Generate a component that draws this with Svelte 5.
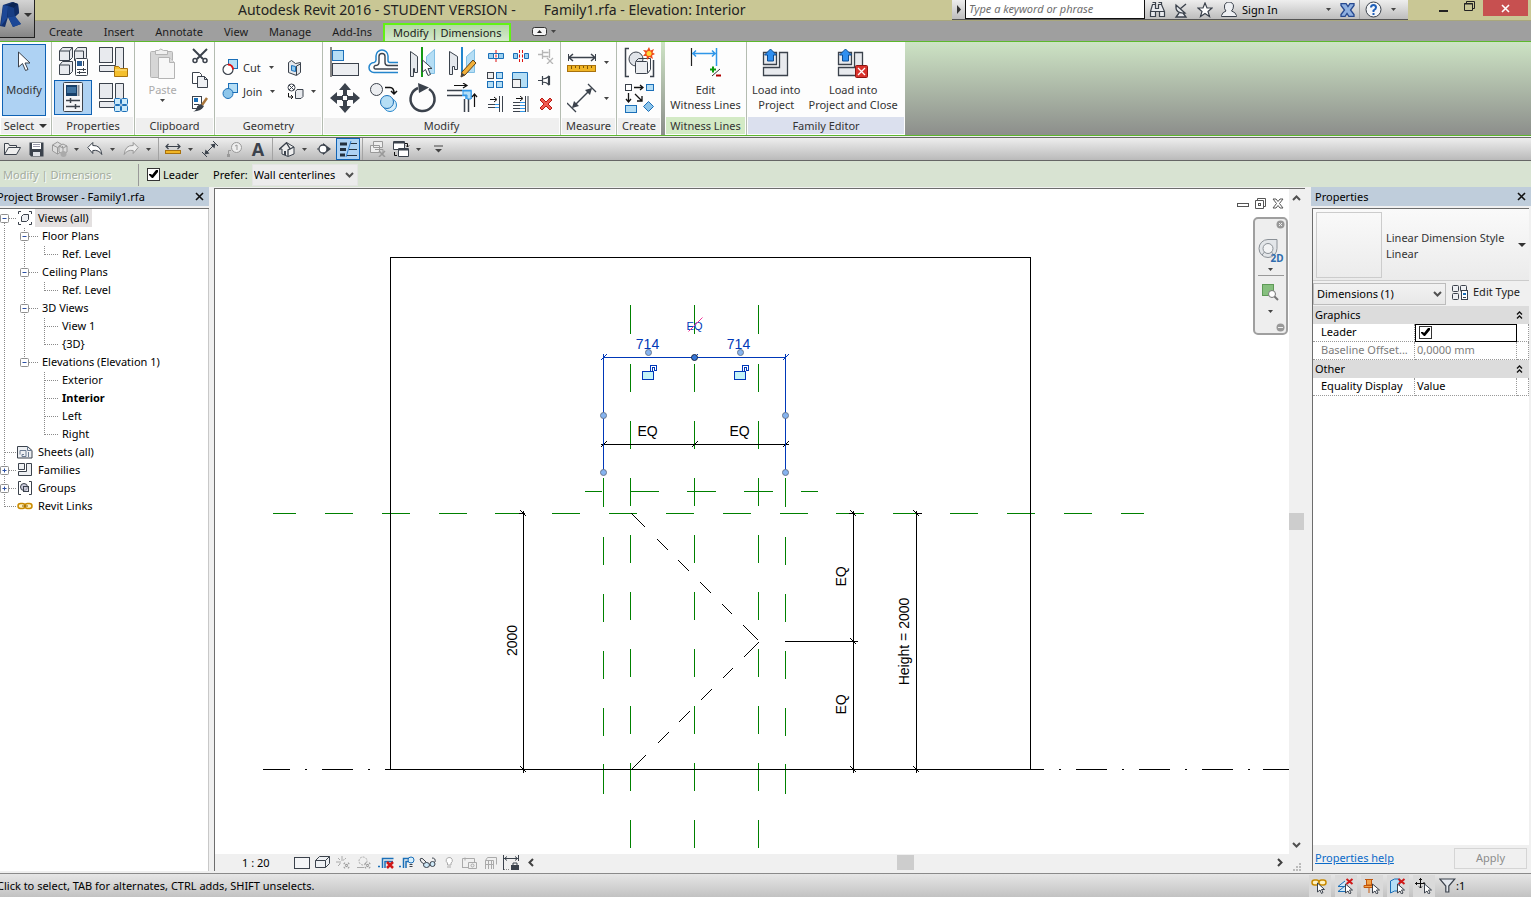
<script lang="ts">
	// Desktop shell of the family editor: title bar, ribbon, project browser,
	// elevation view and properties palette.

	interface TreeNode {
		label: string;
		depth: number;
		/** Expander state, when the node has one */
		box?: '-' | '+';
		icon?: string;
		/** Depths whose guide line runs through the full row */
		through: number[];
		/** Last child of its parent, so the guide stops at the middle */
		last?: boolean;
		bold?: boolean;
		selected?: boolean;
	}

	const D = '#3b424c';
	const B = '#1b6fb8';
	const L = '#b5def5';

	// Icon artwork: [width, height, markup]
	const icons: Record<string, [number, number, string]> = {
		app: [22, 28, `<path d="M0 25L3 4 12 1l6 2 1 9-4 4 6 7-8 3-5-10-3 10z" fill="#12306e"/><path d="M3 4l5 1-1 12-6 8z" fill="#1d4796"/><path d="M8 5l5-4 5 2-4 4z" fill="#0b2453"/><path d="M8 16l7-1 6 8-8 3z" fill="#1b4797"/><path d="M8 5l6 2 1 8-7 1z" fill="#173d84"/><path d="M14 7l4-4 1 9-4 3z" fill="#0f2c66"/>`],
		cursor: [14, 22, `<path d="M1.500 1v15l4-3.500 3 7 2.500-1-3-6.500h5z" fill="#fff" stroke="${D}"/>`],
		types: [31, 31, `<g stroke="${D}" fill="#e8eaee"><path d="M1.500 5l3-3.500h10v10l-3 3h-10z"/><path d="M16.500 5l3-3.500h9v10l-2 3h-10z"/><path d="M1.500 19l3-3.500h10v10l-3 3h-10z"/><path d="M1.500 5h10v9.500M11.500 5l3-3.500M16.500 5h9v9M1.500 19h10v9.500" fill="none"/><rect x="17.500" y="12.500" width="12" height="17" rx="1" fill="#fff"/></g><path d="M19 15h5v5h-5z" fill="#2a5c94"/><path d="M25.500 15v5M19 23.500h9M19 26.500h9M25.500 22v3M21.500 25v3" stroke="${D}"/>`],
		familyFolder: [31, 31, `<g stroke="${D}" fill="#e8eaee"><rect x="1.500" y="1.500" width="13" height="15"/><path d="M17.500 1.500h8v24h-24v-6h16z"/></g><path d="M16.500 20.500h4l2 2h7v8h-13z" fill="#f4bf2c" stroke="#a9720d"/><path d="M17 24h12" stroke="#ffe694"/>`],
		propsPalette: [22, 31, `<rect x="1.500" y=".5" width="19" height="29" rx="1" fill="#f4f5f7" stroke="${D}"/><path d="M4 3h11v11H4z" fill="#173f68"/><path d="M5 5h9v6H5z" fill="#3e719f"/><path d="M16.500 3v11" stroke="#8b8f96" stroke-width="2"/><path d="M4 18.500h14M4 24.500h14M8.500 16v5M13.500 22v5" stroke="${D}" stroke-width="1.500"/>`],
		familyGrid: [31, 31, `<g stroke="${D}" fill="#e8eaee"><rect x="1.500" y="1.500" width="13" height="15"/><path d="M17.500 1.500h8v24h-24v-6h16z"/></g><g fill="#cbeafa" stroke="${B}"><rect x="16.500" y="16.500" width="6" height="6" rx="1"/><rect x="23.500" y="16.500" width="6" height="6" rx="1"/><rect x="16.500" y="23.500" width="6" height="6" rx="1"/><rect x="23.500" y="23.500" width="6" height="6" rx="1"/></g>`],
		paste: [26, 32, `<g stroke="#b4b4b4"><rect x=".5" y="3.500" width="22" height="26" rx="1" fill="#d6d6d6"/><path d="M5.500 2.500h3q2-3 5 0h4v4h-12z" fill="#f0f0f0"/><path d="M8.500 9.500h11l5 5v16h-16z" fill="#f7f7f7"/><path d="M19.500 9.500v5h5" fill="#ddd"/></g>`],
		cutClip: [16, 16, `<path d="M1 1l10 10M15 1L5 11" stroke="${D}" stroke-width="2"/><circle cx="3" cy="12.500" r="2" fill="#fff" stroke="${D}" stroke-width="1.500"/><circle cx="13" cy="12.500" r="2" fill="#fff" stroke="${D}" stroke-width="1.500"/>`],
		copyClip: [16, 16, `<path d="M.5.5h7l2 2v9h-9z" fill="#fff" stroke="${D}"/><path d="M5.500 4.500h7l3 3v8h-10z" fill="#eef0f3" stroke="${D}"/><path d="M12.500 4.500v3h3" fill="none" stroke="${D}"/>`],
		matchType: [16, 16, `<rect x=".5" y=".5" width="9" height="12" fill="#fff" stroke="${D}"/><path d="M2 2h4v4H2z" fill="${B}"/><path d="M2 8.500h5" stroke="${D}"/><path d="M15 2l-5 7" stroke="#a8753a" stroke-width="2.500"/><path d="M8 8l4 2q-2 5-11 5.500 4-1.500 4-5z" fill="${D}"/>`],
		cutGeom: [17, 17, `<rect x="6.500" y=".5" width="9" height="9" fill="${L}" stroke="${B}"/><circle cx="6" cy="10.500" r="5" fill="#fff" stroke="${D}" stroke-width="1.200"/><path d="M6 5.500a5 5 0 0 1 5 5" fill="none" stroke="#e81010" stroke-width="1.800"/>`],
		joinGeom: [17, 17, `<rect x="6.500" y=".5" width="9" height="9" fill="${L}" stroke="${B}"/><circle cx="6" cy="10.500" r="5" fill="#8ec6ea" stroke="${B}"/>`],
		cope: [16, 16, `<path d="M1.500 2.500l3-2 4 3 5-1v10l-4 3-8-3z" fill="#e4e7eb" stroke="${D}"/><path d="M4.500 5.500l4 1v5l-4-1z" fill="#8ecaf0" stroke="${B}"/><path d="M9.500 15V6l4-2" fill="none" stroke="${D}"/>`],
		split: [17, 17, `<circle cx="4.500" cy="4.500" r="3.500" fill="#fff" stroke="${D}"/><path d="M2 2l5 5M7 2L2 7" stroke="${D}"/><path d="M8.500 8.500l1.500-2h6v7l-2 2H8.500z" fill="#e8eaee" stroke="${D}"/><path d="M1.500 10v4H6M4 12l2 2-2 2" fill="none" stroke="#111"/>`],
		align: [30, 30, `<path d="M1 0v30" stroke="#111"/><rect x="2.500" y="3.500" width="11" height="10" fill="${L}" stroke="${B}"/><rect x="2.500" y="16.500" width="26" height="12" fill="#eceef1" stroke="${D}"/>`],
		offset: [31, 30, `<path d="M30 15.500h-8q-2 0-2-2V9a6 6 0 0 0-12 0v4q0 2-2 2.500a5 5 0 0 0 0 10h24" fill="none" stroke="#2385cc" stroke-width="1.500"/><path d="M30 18.500h-10q-3 0-3-3V9.500a3 3 0 0 0-6 0v6q0 3-4 3a2 2 0 0 0 0 3.500h23" fill="none" stroke="${D}" stroke-width="1.400"/>`],
		mirrorPick: [30, 31, `<path d="M2.500 4.500l7 5v16h-3v-4h-1v8h-3z" fill="#e5e8ec" stroke="${D}"/><path d="M26.500 2.500l-8 7v17h8z" fill="${L}" stroke="#81bfe4"/><path d="M14 0v30" stroke="#159a15" stroke-width="2"/><path d="M14.500 13v12l3-2.500 2.500 6 2.500-1-2.500-6h4z" fill="#fff" stroke="${D}"/>`],
		mirrorDraw: [30, 31, `<path d="M2.500 4.500l8 5v13h-3v-3h-2v8h-3z" fill="#e5e8ec" stroke="${D}"/><path d="M27.500 2.500l-8 7v16h8z" fill="${L}" stroke="#81bfe4"/><path d="M15 0v28" stroke="#2385cc" stroke-width="2"/><path d="M26 13l3 3-11 12-4 2 1-5z" fill="#f2b13a" stroke="#614016"/><path d="M14 30l1-4 3 2z" fill="${D}"/>`],
		move: [30, 30, `<path d="M15 0l6 7h-4v5h-4V7H9zM15 30l6-7h-4v-5h-4v5H9zM0 15l7-6v4h5v4H7v4zM30 15l-7-6v4h-5v4h5v4z" fill="${D}"/><rect x="12.500" y="12.500" width="5" height="5" fill="#fff" stroke="${D}"/>`],
		copy: [30, 30, `<circle cx="7.500" cy="6.500" r="6" fill="#eceef1" stroke="${D}"/><path d="M16 4.500h5q4 0 4 6M22 8l3 3 3-3" fill="none" stroke="#111" stroke-width="1.500"/><circle cx="21" cy="22" r="6.500" fill="#d7eefa" stroke="#2385cc"/><circle cx="18" cy="19" r="6.500" fill="${L}" stroke="${B}"/>`],
		rotate: [30, 30, `<path d="M10 5a12 12 0 1 0 11 1" fill="none" stroke="${D}" stroke-width="2.500"/><path d="M10 0l11 4.500-10 5.500z" fill="${D}"/>`],
		trim: [32, 30, `<path d="M1 7.500h15M1 12.500h15M18.500 16v13M22.500 16v13" stroke="${D}" stroke-width="1.500"/><path d="M16 7.500h9V16M16 12.500h4V16" fill="none" stroke="#2f96e8" stroke-width="1.500"/><path d="M17 8h8v8h-4v-4h-4z" fill="${L}" stroke="#2f96e8"/><path d="M8 2.500h12M17 0l4 2.500L17 5M28.500 24V12M26 14l2.500-3 2.500 3" fill="none" stroke="#111" stroke-width="1.200"/>`],
		splitEl: [16, 16, `<path d="M.5 5.500h5v5h-5zM10.500 5.500h5v5h-5z" fill="#9bd0f0" stroke="${B}"/><path d="M8 2v3M8 6.500v3M8 11v3" stroke="#d11"/><path d="M5.500 5.500h5M5.500 10.500h5" stroke="${B}"/>`],
		splitGap: [16, 16, `<path d="M.5 5.500h4v5h-4zM11.500 5.500h4v5h-4z" fill="#9bd0f0" stroke="${B}"/><path d="M6.500 2v3M6.500 6.500v3M6.500 11v3M9.500 2v3M9.500 6.500v3M9.500 11v3" stroke="#d11"/>`],
		unpin: [16, 16, `<path d="M0 6.500h4M4.500 2v9M4.500 4.500h6M4.500 8.500h6M11.500 1v9M9 10l6 6M15 10l-6 6" fill="none" stroke="#b6b6b6" stroke-width="1.300"/>`],
		array: [17, 17, `<g stroke="${B}" fill="${L}"><rect x=".5" y=".5" width="6" height="6" fill="#eee" stroke="${D}"/><rect x="9.500" y=".5" width="6" height="6"/><rect x=".5" y="9.500" width="6" height="6"/><rect x="9.500" y="9.500" width="6" height="6"/></g>`],
		scale: [17, 17, `<path d="M.5.5h15v15H.5z" fill="${L}" stroke="${B}"/><rect x=".5" y="7.500" width="8" height="8" fill="#f3f3f3" stroke="${D}"/>`],
		pin: [16, 16, `<path d="M0 8.500h4M4.500 4v9M4.500 6.500q3 1 6-2v8q-3-3-6-2M11.500 4v9" fill="none" stroke="${D}" stroke-width="1.200"/>`],
		trimOne: [16, 16, `<path d="M0 8.500h7M0 11.500h7M11.500 0v16M14.500 0v16" stroke="${D}"/><path d="M7 8.500h4M7 11.500h4" stroke="#2f96e8"/><path d="M2 3.500h6M6 1l3 2.500L6 6" fill="none" stroke="#111"/>`],
		trimMany: [16, 16, `<path d="M0 6.500h7M0 9.500h7M0 12.500h7M0 15.500h7M12.500 0v16M15 0v16" stroke="${D}"/><path d="M7 6.500h5M7 9.500h5M7 12.500h5M7 15.500h5" stroke="#2f96e8"/><path d="M3 2.500h6M7 0l3 2.500L7 5" fill="none" stroke="#111"/>`],
		del: [14, 14, `<path d="M1 3l2-2 4 4 4-4 2 2-4 4 4 4-2 2-4-4-4 4-2-2 4-4z" fill="#f05a50" stroke="#b81812"/>`],
		measure: [30, 24, `<path d="M2 7.500h26M6 4L2 7.500 6 11M24 4l4 3.500-4 3.500" fill="none" stroke="${D}" stroke-width="1.500"/><path d="M1.500 4v7M28.500 4v7" stroke="${D}"/><rect x=".5" y="15.500" width="28" height="6" fill="#f0b526" stroke="#a9720d"/><path d="M4.500 16v3M8.500 16v2M12.500 16v3M16.500 16v2M20.500 16v3M24.500 16v2" stroke="#7c5408"/>`],
		alignedDim: [30, 30, `<path d="M6 24L24 6" stroke="${D}" stroke-width="1.500"/><path d="M5 25l2-7 5 5zM25 5l-2 7-5-5z" fill="${D}"/><path d="M0 20l9 9M21 1l8 8" stroke="${D}" stroke-width="1.300"/>`],
		createGroup: [31, 31, `<path d="M5 1.500H1.500v28H5M26 29.500h3.500V13" fill="none" stroke="${D}" stroke-width="1.500"/><circle cx="12" cy="12" r="7" fill="#e1e4e9" stroke="${D}"/><rect x="11.500" y="14.500" width="12" height="12" rx="1" fill="#eceef1" stroke="${D}"/><path d="M11.500 14.500l3-3h12v11l-3 4" fill="none" stroke="${D}"/><path d="M25 0l1.500 3.500L30 2l-1.500 3.500L31 7l-3 1.500L29 12l-3.500-2L23 13l-.5-4L19 9l2.500-3L19 3l4 .5z" fill="#ef4a1a"/><circle cx="25" cy="6.500" r="2.500" fill="#ffd83a"/>`],
		createSimilar: [31, 31, `<rect x="1.500" y="1.500" width="6" height="6" fill="#fff" stroke="${D}"/><rect x="22.500" y="1.500" width="7" height="6" fill="${L}" stroke="${B}"/><rect x="1.500" y="22.500" width="11" height="7" fill="${L}" stroke="${B}"/><path d="M24.500 18.500l5 5-5 5-5-5z" fill="#8cc4ea" stroke="${B}"/><path d="M10 4.500h9M16 2l3 2.500L16 7M4.500 10v9M2 16l2.500 3L7 16M11 11l7 7M18 13v5h-5" fill="none" stroke="#111" stroke-width="1.300"/>`],
		witness: [32, 32, `<path d="M1.500 1v18" stroke="#222" stroke-width="1.200"/><path d="M26.500 1v18" stroke="#2f96e8" stroke-width="1.500"/><path d="M2 6.500h24M6 3.500L3 6.500l3 3M22 3.500l3 3-3 3" fill="none" stroke="#2f96e8" stroke-width="1.500"/><path d="M20 22.500h6M23 19.500v6" stroke="#0a9a0a" stroke-width="2"/><path d="M22 29l8-7" stroke="#333"/><path d="M26 28.500h5" stroke="#b00000" stroke-width="2"/>`],
		load: [28, 30, `<g stroke="${D}" stroke-width="1.300" fill="#e8eaee"><path d="M1.500 4.500h13v12h-13zM17.500 4.500h8v23h-24v-8h16z"/></g><path d="M8.500 1l6 6h-3v6h-6V7h-3z" fill="#2f8ff0" stroke="#0d4c92"/>`],
		loadClose: [32, 30, `<g stroke="${D}" stroke-width="1.300" fill="#e8eaee"><path d="M1.500 4.500h13v12h-13zM17.500 4.500h8v23h-24v-8h16z"/></g><path d="M8.500 1l6 6h-3v6h-6V7h-3z" fill="#2f8ff0" stroke="#0d4c92"/><rect x="18.500" y="17.500" width="12" height="12" rx="1" fill="#d8322c" stroke="#8e1410"/><path d="M21 20l7 7M28 20l-7 7" stroke="#fff" stroke-width="1.300"/>`],
		open: [17, 14, `<path d="M.5 12.500v-11h4l1 2h7v2M.5 12.500l4-7h12l-4 7z" fill="#eee" stroke="${D}"/>`],
		save: [15, 15, `<path d="M.5.5h14v14H2l-1.500-2z" fill="${D}"/><path d="M3 1h9v6H3z" fill="#fff"/><path d="M4 10h7v4H4z" fill="#dfe2e6"/><path d="M4 2.500h7M4 4.500h7" stroke="#99a"/>`],
		sync: [18, 17, `<path d="M1.500 4l5-3 5 3v6l-5 3-5-3zM1.500 4l5 2.500 5-2.500M6.500 6.500V13" fill="#ddd" stroke="#999"/><path d="M8 5l4-2 4 2v6l-4 2-4-2zM8 5l4 2 4-2M12 7v5" fill="#ddd" stroke="#999"/><circle cx="12.500" cy="13" r="3" fill="#aaa"/>`],
		undo: [16, 14, `<path d="M.8 5.500l5-5v3q8-.5 9 9-3-5-9-4v3z" fill="#fff" stroke="${D}"/>`],
		redo: [16, 14, `<path d="M15.200 5.500l-5-5v3q-8-.5-9 9 3-5 9-4v3z" fill="#eee" stroke="#999"/>`],
		measureSmall: [16, 12, `<path d="M1 3.500h14M3.500 1L1 3.500 3.500 6M12.500 1L15 3.500 12.500 6" fill="none" stroke="${D}" stroke-width="1.200"/><rect x=".5" y="7.500" width="15" height="3" fill="#f0b526" stroke="#a9720d"/>`],
		dimSmall: [16, 16, `<path d="M4 12l8-8" stroke="${D}"/><path d="M2.500 13.500l1-5 4 4zM13.500 2.500l-1 5-4-4z" fill="${D}"/><path d="M0 11l5 5M11 0l5 5" stroke="${D}"/>`],
		tag: [15, 15, `<circle cx="9.500" cy="5.500" r="5" fill="#eee" stroke="#999"/><path d="M8 4l2-1v5M1.500 12V8.500H4" fill="none" stroke="#999"/><path d="M0 12h3v3H0z" fill="#999"/>`],
		home: [17, 15, `<path d="M.5 7l7-6.500L15 5v7l-6 2.500-6-2.500V7z" fill="#eee" stroke="${D}"/><path d="M0 7.500L7.500.8l4 6.700M9 14V8l6-3" fill="none" stroke="${D}" stroke-width="1.300"/><path d="M5 9h2v4H5z" fill="${D}"/>`],
		section: [14, 14, `<path d="M6 1l8 6-8 6z" fill="${D}"/><circle cx="6" cy="7" r="4" fill="#fff" stroke="${D}" stroke-width="1.300"/><path d="M0 7h2" stroke="${D}"/>`],
		thin: [17, 16, `<path d="M0 3h7M0 8.500h6M0 14h5" stroke="#23303e" stroke-width="3"/><path d="M10 2.500h7M9 8.500h8M7 14.500h10" stroke="#23303e"/><path d="M11 0L6 16" stroke="#2f7fd0"/>`],
		closeHidden: [16, 16, `<path d="M3.500.5h9v6h-9zM.5 4.500h9v7h-9z" fill="#eee" stroke="#999"/><path d="M5 8.500h8v5" fill="none" stroke="#999"/><path d="M9 10l6 6M15 10l-6 6" stroke="#999" stroke-width="1.500"/>`],
		switchWin: [17, 17, `<path d="M.5.5h11v8H.5zM5.500 7.500h10v8h-10z" fill="#fff" stroke="${D}"/><path d="M1 1.500h10M6 8.500h9" stroke="${D}" stroke-width="2"/><path d="M12 2.500h2.500V6M13 4.500l1.500 1.500L16 4.500M4 14.500H1.500V11" fill="none" stroke="#111"/>`],
		binoculars: [17, 16, `<path d="M3.500 2.500h3v4h3v-4h3l3 7v5h-5v-5h-4v5h-5v-5zM3.500.5h3v2M9.500.5h3v2M1 9.500h5M10.500 9.500h5" fill="#e8eaee" stroke="${D}" stroke-width="1.200"/>`],
		dish: [15, 16, `<path d="M2 3q-1 9 9 8zM6 7l6-5M5 11l-3 4h10l-3-4" fill="#e8eaee" stroke="${D}" stroke-width="1.300"/>`],
		star: [16, 16, `<path d="M8 1l2 5h5l-4 3.500 1.500 5L8 11.500l-4.500 3 1.500-5L1 6h5z" fill="#fff" stroke="${D}" stroke-width="1.200"/>`],
		user: [16, 16, `<path d="M5 9q-2-2-1.500-5a4.500 4 0 0 1 9 0q0 3-2 5 4 1 5 4.500v1H.5v-1Q1.500 10 5 9z" fill="#eef0f3" stroke="${D}"/>`],
		exchange: [15, 14, `<path d="M1 .5h5l2 3 2-3h4v2L10.500 7l3.500 4.500v2H9l-2-3-2 3H1v-2L4.500 7 1 2.500z" fill="#8fb0e0" stroke="#26488f" stroke-width="1.300"/>`],
		help: [17, 17, `<circle cx="8.500" cy="8.500" r="7.500" fill="#f4f6f9" stroke="${D}"/><path d="M6 6.500q0-2.500 2.500-2.500T11 6.500q0 1.500-2.500 3V11M8.500 12v2" fill="none" stroke="#1e5fb8" stroke-width="2"/>`],
		views: [14, 14, `<path d="M3 .5H.5V3M11 .5h2.500V3M3 13.500H.5V11M11 13.500h2.500V11" fill="none" stroke="${D}"/><path d="M3.500 5.500l2-2h5v5l-2 2h-5z" fill="#eef0f3" stroke="${D}"/>`],
		sheets: [16, 14, `<path d="M.5 1.500h10l4.500 4v7.500H.500z" fill="#eef0f3" stroke="${D}"/><path d="M10.500 1.500v4h4M3 9.500V5.500h6v6H5v-2h2M11.500 7v5" fill="none" stroke="#6b7c93"/>`],
		families: [14, 14, `<path d="M.5.5h6v6h-6zM8.500.5h5v12h-13v-4h8z" fill="#eef0f3" stroke="${D}"/>`],
		groups: [14, 14, `<path d="M3 .5H.5v13H3M11 .5h2.500v13H11" fill="none" stroke="${D}"/><circle cx="6" cy="6" r="3.500" fill="#ccd" stroke="${D}"/><rect x="5.500" y="5.500" width="5" height="5" fill="#ccd" fill-opacity=".6" stroke="${D}"/>`],
		links: [16, 8, `<rect x="1" y="1.500" width="7" height="5" rx="2.500" fill="#fff2c0" stroke="#c98a00" stroke-width="1.500"/><rect x="8" y="1.500" width="7" height="5" rx="2.500" fill="#fff2c0" stroke="#c98a00" stroke-width="1.500"/><path d="M5 4h6" stroke="#8a5c00"/>`],
		editType: [17, 17, `<g fill="#eef0f3" stroke="${D}"><rect x=".5" y="1.500" width="6" height="6" rx="1"/><rect x="8.500" y="1.500" width="6" height="6" rx="1"/><rect x=".5" y="9.500" width="6" height="6" rx="1"/><rect x="9.500" y="6.500" width="6" height="9" fill="#fff"/></g><path d="M11 9h3v2h-3z" fill="${B}"/><path d="M11 13.500h3" stroke="${D}"/>`],
		detail: [16, 12, `<rect x=".5" y=".5" width="15" height="11" fill="#f4f5f7" stroke="${D}"/>`],
		visual: [15, 13, `<path d="M.5 4.500l4-4h10v7l-4 4H.5zM.5 4.500h10v7M10.500 4.500l4-4" fill="#eef0f3" stroke="${D}"/>`],
		sunOff: [15, 13, `<path d="M6 0v3M0 6h3M2 2l2 2M10 2L8.500 3.500M2 10l2-2M5 4h3M4 5v3" stroke="#aaa"/><path d="M8 7l5 5M13 7l-5 5" stroke="#999" stroke-width="2" stroke-dasharray="1 1"/>`],
		shadowOff: [15, 13, `<circle cx="6" cy="5" r="4" fill="none" stroke="#aaa" stroke-dasharray="2 1"/><path d="M0 11.500h7" stroke="#aaa"/><path d="M8 7l5 5M13 7l-5 5" stroke="#999" stroke-width="2" stroke-dasharray="1 1"/>`],
		cropOff: [16, 13, `<path d="M0 10.500h2M4.500 12V2.500h11M7 12V5.500h8" fill="none" stroke="${B}" stroke-width="1.500"/><path d="M9 6l6 6M15 6l-6 6" stroke="#d01818" stroke-width="2.500"/>`],
		cropShow: [16, 13, `<path d="M0 10.500h2M4.500 12V2.500h6M7 12V5.500h3" fill="none" stroke="${B}" stroke-width="1.500"/><circle cx="12" cy="4" r="3" fill="#d8effc" stroke="${B}"/><path d="M10.500 8.500h3M10.500 10.500h3" stroke="${D}"/>`],
		glasses: [17, 12, `<path d="M1 2q2-2 4 1l3 3M1 2q0 3 4 5M16 5q1-4-3-4" fill="none" stroke="${D}"/><ellipse cx="7.500" cy="8" rx="3" ry="2.500" fill="#cfe9f8" stroke="${D}"/><ellipse cx="13.500" cy="7" rx="2.500" ry="2.500" fill="#cfe9f8" stroke="${D}"/>`],
		bulb: [8, 11, `<path d="M4 .5a3 3 0 0 1 2 5.500v2H2.500V6A3 3 0 0 1 4 .5zM2 10h4" fill="#fff" stroke="#aaa"/>`],
		viewTpl: [15, 12, `<path d="M.5 11V1.500h12V5M3 .5v3M6.500 5.500h8v6h-8zM.500 10.500H6" fill="none" stroke="#aaa"/><circle cx="10.500" cy="8.500" r="1.500" fill="none" stroke="#aaa"/>`],
		analytic: [15, 12, `<path d="M2.500 12V3.500l2-3h9v7M2.500 3.500h8V12M5.500 4v8M8.500 4v8M2 7.500h9" fill="none" stroke="#aaa"/>`],
		constraints: [17, 16, `<path d="M.5 0v15M15.500 0v6M1 3.500h14M4 1.500L1.500 3.500 4 5.500M12 1.500l2.500 2-2.500 2" fill="none" stroke="${D}"/><rect x="8" y="10" width="8" height="5" fill="${D}"/><path d="M10 10V8h4v2" fill="none" stroke="${D}"/><path d="M1 14.500h6" stroke="#888" stroke-dasharray="1 1"/>`],
		selLinks: [18, 16, `<rect x="1" y="2" width="7" height="5" rx="2.500" fill="#fff2c0" stroke="#c98a00" stroke-width="1.500"/><rect x="8" y="2" width="7" height="5" rx="2.500" fill="#fff2c0" stroke="#c98a00" stroke-width="1.500"/><path d="M6.500 5v9l2.500-2 1.500 3.500 1.500-1-1.500-3h3z" fill="#fff" stroke="${D}"/>`],
		selUnder: [18, 16, `<path d="M8 3L1 8.500h9M8 8L1 13.500h9" fill="#cfe9f8" stroke="${B}"/><path d="M9.500 1l6 5M15.500 1l-6 5" stroke="#d01818" stroke-width="2"/><path d="M8.500 6v9l2.500-2 1.500 3 1.500-1-1.500-3h3z" fill="#fff" stroke="${D}"/>`],
		selPinned: [18, 16, `<path d="M2 1.500h8M3.500 2v5h5V2M1 7.500h10v2H1zM6 10v5" fill="#f2a44a" stroke="#c2560c"/><path d="M9.500 6v9l2.500-2 1.500 3 1.500-1-1.500-3h3z" fill="#fff" stroke="${D}"/>`],
		selFace: [18, 16, `<path d="M1.500 3l4-2h5v12h-5l-4 2z" fill="#b5def5" stroke="${B}"/><path d="M9.500 1l6 5M15.500 1l-6 5" stroke="#d01818" stroke-width="2"/><path d="M8.500 6v9l2.500-2 1.500 3 1.500-1-1.500-3h3z" fill="#fff" stroke="${D}"/>`],
		selDrag: [18, 16, `<path d="M5.500 0v10M0 5.500h10M4 2l1.500-1.500L7 2M4 8.500L5.500 10 7 8.500M2 4L.5 5.500 2 7M8.500 4L10 5.500" fill="none" stroke="#111"/><path d="M9.500 6v9l2.500-2 1.500 3 1.500-1-1.500-3h3z" fill="#fff" stroke="${D}"/>`],
		filter: [17, 15, `<path d="M.8 1h15l-6 7v6h-3V8z" fill="#e4e8ee" stroke="${D}" stroke-width="1.200"/>`],
		wheel: [24, 26, `<path d="M10 1.500h9v9a9 9 0 1 1-9-9z" fill="#e3e6e9" stroke="#8a9096"/><circle cx="10" cy="10.500" r="5" fill="#f2f3f4" stroke="#8a9096"/><path d="M6.500 14L4 17M13.500 14l2.500 3" stroke="#8a9096"/>`],
		zoomRegion: [17, 17, `<rect x=".5" y=".5" width="11" height="11" fill="#86bf7e" stroke="#5e9a57"/><circle cx="10" cy="10" r="3.500" fill="#fff" stroke="#777"/><path d="M12.500 12.500l3.500 3.500" stroke="#777" stroke-width="2"/>`],
		mdiMin: [12, 12, `<rect x=".5" y="6.500" width="11" height="3" fill="#fff" stroke="#555"/>`],
		mdiRestore: [11, 11, `<path d="M2.500 2.500v-2h8v8h-2M.5 2.500h8v8h-8z" fill="#fff" stroke="#555"/><rect x="3.500" y="5.500" width="2" height="2" fill="none" stroke="#555"/>`],
		mdiClose: [12, 11, `<path d="M1 1h3l2 2.500L8 1h3L7.500 5.500 11 10H8L6 7.500 4 10H1l3.500-4.500z" fill="#fff" stroke="#555"/>`],
		x: [9, 9, `<path d="M1 1l7 7M8 1L1 8" stroke="#111" stroke-width="1.600"/>`],
		caret: [5, 3, `<path d="M0 0h5L2.500 3z" fill="#444"/>`],
		caretWide: [8, 4, `<path d="M0 0h8L4 4z" fill="#333"/>`],
		chevDown: [9, 6, `<path d="M1 1l3.500 3.500L8 1" fill="none" stroke="#505050" stroke-width="2"/>`],
		chevUp: [9, 6, `<path d="M1 5l3.500-3.500L8 5" fill="none" stroke="#505050" stroke-width="2"/>`],
		chevLeft: [6, 9, `<path d="M5 1L1.500 4.500 5 8" fill="none" stroke="#404040" stroke-width="2"/>`],
		chevRight: [6, 9, `<path d="M1 1l3.500 3.500L1 8" fill="none" stroke="#404040" stroke-width="2"/>`],
		collapse: [7, 8, `<path d="M1 3.500l2.500-2.500L6 3.500M1 7.500L3.500 5 6 7.500" fill="none" stroke="#111" stroke-width="1.300"/>`],
		ribbonToggle: [15, 10, `<rect x=".5" y=".5" width="14" height="8" rx="2" fill="#f4f4f4" stroke="#333"/><path d="M5 6h5L7.500 3z" fill="#222"/>`],
		customize: [9, 8, `<path d="M0 1h9" stroke="#444"/><path d="M1 4h7L4.500 7.500z" fill="#444"/>`],
		grip: [8, 8, `<path d="M6 0h2v2H6zM3 3h2v2H3zM6 3h2v2H6zM0 6h2v2H0zM3 6h2v2H3zM6 6h2v2H6z" fill="#bbb"/>`],
		playRight: [6, 9, `<path d="M1 0v9l4-4.500z" fill="#333"/>`],
		winMin: [9, 12, `<path d="M0 10h9" stroke="#222" stroke-width="2"/>`],
		winMax: [11, 11, `<path d="M2.500 2V.5h8v7H9M.5 2.500h8v7h-8z" fill="none" stroke="#222"/><path d="M0 3h9" stroke="#222"/>`],
		winClose: [9, 9, `<path d="M1 1l7 7M8 1L1 8" stroke="#fff" stroke-width="1.600"/>`],
		navClose: [9, 9, `<circle cx="4.500" cy="4.500" r="4" fill="#999"/><path d="M3 3l3 3M6 3L3 6" stroke="#eee"/>`],
		navMenu: [9, 9, `<circle cx="4.500" cy="4.500" r="4" fill="#999"/><path d="M2 4.500h5" stroke="#eee"/>`]
	};

	const tabs = ['Create', 'Insert', 'Annotate', 'View', 'Manage', 'Add-Ins', 'Modify | Dimensions'];

	const bigModify = ['align', 'offset', 'mirrorPick', 'mirrorDraw', 'move', 'copy', 'rotate', 'trim'];
	const smallModify = [
		'splitEl', 'splitGap', 'unpin',
		'array', 'scale', 'pin',
		'trimOne', 'trimMany', 'del'
	];

	const tree: TreeNode[] = [
		{ label: 'Views (all)', depth: 0, box: '-', icon: 'views', through: [], selected: true },
		{ label: 'Floor Plans', depth: 1, box: '-', through: [0] },
		{ label: 'Ref. Level', depth: 2, through: [0, 1], last: true },
		{ label: 'Ceiling Plans', depth: 1, box: '-', through: [0] },
		{ label: 'Ref. Level', depth: 2, through: [0, 1], last: true },
		{ label: '3D Views', depth: 1, box: '-', through: [0] },
		{ label: 'View 1', depth: 2, through: [0, 1] },
		{ label: '{3D}', depth: 2, through: [0, 1], last: true },
		{ label: 'Elevations (Elevation 1)', depth: 1, box: '-', through: [0], last: true },
		{ label: 'Exterior', depth: 2, through: [0] },
		{ label: 'Interior', depth: 2, through: [0], bold: true },
		{ label: 'Left', depth: 2, through: [0] },
		{ label: 'Right', depth: 2, through: [0], last: true },
		{ label: 'Sheets (all)', depth: 0, icon: 'sheets', through: [] },
		{ label: 'Families', depth: 0, box: '+', icon: 'families', through: [] },
		{ label: 'Groups', depth: 0, box: '+', icon: 'groups', through: [] },
		{ label: 'Revit Links', depth: 0, icon: 'links', through: [], last: true }
	];

	const viewControls = [
		'detail', 'visual', 'sunOff', 'shadowOff', 'cropOff', 'cropShow',
		'glasses', 'bulb', 'viewTpl', 'analytic', 'constraints'
	];
	const selectControls = ['selLinks', 'selUnder', 'selPinned', 'selFace', 'selDrag'];

	// Reference planes of the elevation
	const hPlane = [272, 324, 381, 438, 494, 551, 608, 665, 722, 779, 835, 892, 949, 1006, 1063, 1120];
	const grips = [[648, 352], [740, 352], [603, 415], [785, 415], [603, 472], [785, 472]];
	const swing = [[0, 14], [26, 37], [47, 58], [69, 80], [91, 101], [112, 127]];

	let leader = $state(true);
	let leaderProp = $state(true);
</script>

{#snippet icon(name: string)}
	{@const [w, h, body] = icons[name]}
	<svg class="icon" width={w} height={h} viewBox="0 0 {w} {h}" aria-hidden="true">{@html body}</svg>
{/snippet}

{#snippet tool(name: string, label: string)}
	<button class="tool" aria-label={label}>{@render icon(name)}</button>
{/snippet}

{#snippet drop(name: string, label: string)}
	<button class="drop" aria-label={label}>{@render icon(name)}{@render icon('caret')}</button>
{/snippet}

{#snippet tick(x: number, y: number, flip: number)}
	<path d="M{x - 3} {y - 3 * flip}L{x + 3} {y + 3 * flip}" />
{/snippet}

<div class="window">
	<header class="top">
		<button class="app-button" aria-label="Application menu">
			{@render icon('app')}{@render icon('caretWide')}
		</button>
		<div class="title-bar">
			<h1><span>Autodesk Revit 2016 - STUDENT VERSION -</span><span>Family1.rfa - Elevation: Interior</span></h1>
			<div class="info-center">
				{@render tool('playRight', 'Toggle search')}
				<input type="text" placeholder="Type a keyword or phrase" aria-label="Search" />
				{@render tool('binoculars', 'Search')}
				{@render tool('dish', 'Communication center')}
				{@render tool('star', 'Favorites')}
				<button class="sign-in">{@render icon('user')}<span>Sign In</span>{@render icon('caret')}</button>
				{@render tool('exchange', 'Exchange apps')}
				<i class="rule"></i>
				<button class="help" aria-label="Help">{@render icon('help')}{@render icon('caret')}</button>
			</div>
			<div class="window-buttons">
				{@render tool('winMin', 'Minimize')}
				{@render tool('winMax', 'Restore')}
				<button class="close" aria-label="Close">{@render icon('winClose')}</button>
			</div>
		</div>
		<nav class="tabs">
			{#each tabs as tab, i}
				<button class="tab" class:active={i === 6}>{tab}</button>
			{/each}
			<button class="toggle" aria-label="Minimize ribbon">{@render icon('ribbonToggle')}{@render icon('caret')}</button>
		</nav>
	</header>

	<section class="ribbon">
		<div class="panel select">
			<div class="body"><button class="large on">{@render icon('cursor')}<span>Modify</span></button></div>
			<h2>Select {@render icon('caretWide')}</h2>
		</div>
		<div class="panel props">
			<div class="body">
				{@render tool('types', 'Family types')}
				{@render tool('familyFolder', 'Family category')}
				<button class="tool on" aria-label="Properties">{@render icon('propsPalette')}</button>
				{@render tool('familyGrid', 'Type properties')}
			</div>
			<h2>Properties</h2>
		</div>
		<div class="panel clipboard">
			<div class="body">
				<button class="large" disabled>{@render icon('paste')}<span>Paste</span>{@render icon('caret')}</button>
				<div class="stack">
					{@render tool('cutClip', 'Cut')}
					{@render tool('copyClip', 'Copy')}
					{@render tool('matchType', 'Match type')}
				</div>
			</div>
			<h2>Clipboard</h2>
		</div>
		<div class="panel geometry">
			<div class="body">
				<button class="row-tool">{@render icon('cutGeom')}<span>Cut</span>{@render icon('caret')}</button>
				<button class="row-tool" aria-label="Cope">{@render icon('cope')}</button>
				<button class="row-tool">{@render icon('joinGeom')}<span>Join</span>{@render icon('caret')}</button>
				<button class="row-tool wide" aria-label="Split face">{@render icon('split')}{@render icon('caret')}</button>
			</div>
			<h2>Geometry</h2>
		</div>
		<div class="panel modify">
			<div class="body">
				<div class="big-grid">
					{#each bigModify as name}{@render tool(name, name)}{/each}
				</div>
				<div class="small-grid">
					{#each smallModify as name}{@render tool(name, name)}{/each}
				</div>
			</div>
			<h2>Modify</h2>
		</div>
		<div class="panel measure">
			<div class="body">
				<button class="row-tool wide" aria-label="Measure">{@render icon('measure')}{@render icon('caret')}</button>
				<button class="row-tool wide" aria-label="Aligned dimension">{@render icon('alignedDim')}{@render icon('caret')}</button>
			</div>
			<h2>Measure</h2>
		</div>
		<div class="panel create">
			<div class="body">
				{@render tool('createGroup', 'Create group')}
				{@render tool('createSimilar', 'Create similar')}
			</div>
			<h2>Create</h2>
		</div>
		<div class="panel witness">
			<div class="body">
				<button class="large">{@render icon('witness')}<span>Edit<br />Witness Lines</span></button>
			</div>
			<h2>Witness Lines</h2>
		</div>
		<div class="panel editor">
			<div class="body">
				<button class="large">{@render icon('load')}<span>Load into<br />Project</span></button>
				<button class="large">{@render icon('loadClose')}<span>Load into<br />Project and Close</span></button>
			</div>
			<h2>Family Editor</h2>
		</div>
	</section>

	<div class="quick-access">
		{@render tool('open', 'Open')}
		{@render tool('save', 'Save')}
		{@render drop('sync', 'Synchronize')}
		{@render drop('undo', 'Undo')}
		{@render drop('redo', 'Redo')}
		<i class="rule"></i>
		{@render drop('measureSmall', 'Measure')}
		{@render tool('dimSmall', 'Aligned dimension')}
		{@render tool('tag', 'Tag')}
		<button class="tool letter" aria-label="Text">A</button>
		<i class="rule"></i>
		{@render drop('home', 'Default 3D view')}
		{@render tool('section', 'Section')}
		<button class="tool on" aria-label="Thin lines">{@render icon('thin')}</button>
		<i class="rule"></i>
		{@render tool('closeHidden', 'Close hidden windows')}
		{@render drop('switchWin', 'Switch windows')}
		{@render tool('customize', 'Customize toolbar')}
	</div>

	<div class="options">
		<span class="mode">Modify | Dimensions</span>
		<label class="leader"><input type="checkbox" bind:checked={leader} />Leader</label>
		<label for="prefer">Prefer:</label>
		<div class="combo prefer">
			<select id="prefer"><option>Wall centerlines</option><option>Wall faces</option></select>
			{@render icon('chevDown')}
		</div>
	</div>

	<main>
		<aside class="browser">
			<header class="palette-title">
				<h2>Project Browser - Family1.rfa</h2>
				<button aria-label="Close">{@render icon('x')}</button>
			</header>
			<ul class="tree">
				{#each tree as node, i}
					{@const x = node.depth * 20 + 4}
					<li>
						<svg class="guides" width={node.depth * 20 + (node.depth ? 19 : 16)} height="18" aria-hidden="true">
							<g transform="translate(.5 .5)">
								<g class="dots">
									{#each node.through as level}<path d="M{level * 20 + 4} 0v18" />{/each}
									<path d="M{x} {i === 0 ? 9 : 0}V{node.last ? 9 : 18}M{x} 9h{node.depth ? 15 : 12}" />
									{#if i === 0}<path d="M24 16v2" />{/if}
								</g>
								{#if node.box}
									<rect x={x - 4} y="5" width="8" height="8" rx="1" />
									<path class="sign" d="M{x - 2} 9h4{node.box === '+' ? 'm-2 -2v4' : ''}" />
								{/if}
							</g>
						</svg>
						{#if node.icon}<span class="node-icon">{@render icon(node.icon)}</span>{/if}
						<button class="node" class:bold={node.bold} class:selected={node.selected}>{node.label}</button>
					</li>
				{/each}
			</ul>
		</aside>

		<section class="view">
			<div class="canvas">
				<svg class="drawing" width="100%" height="100%" role="img" aria-label="Interior elevation">
					<g transform="translate(-214.5 -188.500)">
						<g class="green">
							{#each [630, 694, 758] as x}
								<path d="M{x} 304v29" />
								<path d="M{x} 363V848" stroke-dasharray="28 29" />
							{/each}
							{#each [603, 785] as x}
								<path d="M{x} 477v29" />
								<path d="M{x} 536V735" stroke-dasharray="28 29" />
								<path d="M{x} 763v30" />
							{/each}
							<path d="M584 491h17M629 491h29M686 491h29M743 491h29M800 491h17" />
							{#each hPlane as x, i}
								<path d="M{x} 513h{i === 0 || i === 15 ? 23 : 28}" />
							{/each}
						</g>
						<g class="black">
							<path d="M390 769V257H1030V769M384 769H1043" />
							<path d="M262 769h27M304 769h2M321 769h31M367 769h2M1058 769h2M1075 769h31M1121 769h2M1138 769h31M1184 769h2M1201 769h31M1247 769h2M1262 769h26" />
							<path d="M523 510V772M853 510V772M916 510V772M784 641H857M600 444H788M518 513h6M848 513h6M916 513h5" />
							{#each swing as [a, b]}
								<path d="M{631 + a} {513 + a}L{631 + b} {513 + b}M{631 + a} {769 - a}L{631 + b} {769 - b}" />
							{/each}
							{#each [523, 853, 916] as x}
								{@render tick(x, 513, 1)}
								{@render tick(x, 769, 1)}
							{/each}
							{@render tick(853, 641, 1)}
							{#each [603, 694, 785] as x}{@render tick(x, 444, -1)}{/each}
						</g>
						<g class="blue">
							<path d="M603 357H785M603 353V472M785 353V472" />
							{#each [603, 694, 785] as x}{@render tick(x, 357, -1)}{/each}
							{#each [642, 734] as x}
								<rect class="lock" {x} y="371" width="11" height="8" />
								<path d="M{x + 8} 370v-5h6v5h-2v-3h-2v3" />
							{/each}
						</g>
						<g class="grips">
							{#each grips as [x, y]}<circle cx={x} cy={y} r="3" />{/each}
							<circle class="dark" cx="694" cy="357" r="3" />
						</g>
						<g class="dim-text">
							<text x="647" y="435">EQ</text>
							<text x="739" y="435">EQ</text>
							<text class="picked" x="647" y="348">714</text>
							<text class="picked" x="738" y="348">714</text>
							<text class="picked small" x="694" y="329">EQ</text>
							<text transform="translate(516 640) rotate(-90)">2000</text>
							<text transform="translate(845 576) rotate(-90)">EQ</text>
							<text transform="translate(845 704) rotate(-90)">EQ</text>
							<text transform="translate(908 641) rotate(-90)">Height = 2000</text>
						</g>
						<path class="pink" d="M688 331l14-14" />
					</g>
				</svg>
				<div class="mdi">
					{@render tool('mdiMin', 'Minimize view')}
					{@render tool('mdiRestore', 'Restore view')}
					{@render tool('mdiClose', 'Close view')}
				</div>
				<div class="nav-bar">
					<button class="corner" aria-label="Close navigation bar">{@render icon('navClose')}</button>
					<button class="wheel" aria-label="Steering wheel 2D">{@render icon('wheel')}<b>2D</b></button>
					{@render icon('caret')}
					<hr />
					{@render tool('zoomRegion', 'Zoom region')}
					{@render icon('caret')}
					<button class="corner" aria-label="Navigation bar options">{@render icon('navMenu')}</button>
				</div>
			</div>
			<div class="v-scroll">
				{@render tool('chevUp', 'Scroll up')}
				<i></i>
				{@render tool('chevDown', 'Scroll down')}
			</div>
			<div class="view-bar">
				<span class="scale">1 : 20</span>
				{#each viewControls as name}{@render tool(name, name)}{/each}
				<div class="h-scroll">
					{@render tool('chevLeft', 'Scroll left')}
					<i></i>
					{@render tool('chevRight', 'Scroll right')}
				</div>
			</div>
			<div class="size-grip">{@render icon('grip')}</div>
		</section>

		<aside class="properties">
			<header class="palette-title">
				<h2>Properties</h2>
				<button aria-label="Close">{@render icon('x')}</button>
			</header>
			<div class="palette-body">
				<button class="type-selector">
					<i class="preview"></i>
					<span>Linear Dimension Style<br />Linear</span>
					{@render icon('caretWide')}
				</button>
				<div class="filter-row">
					<div class="combo">
						<select aria-label="Element filter"><option>Dimensions (1)</option></select>
						{@render icon('chevDown')}
					</div>
					<button class="edit-type">{@render icon('editType')}Edit Type</button>
				</div>
				<div class="table-area">
					<table>
						<colgroup>
							<col class="name-col" />
							<col />
							<col class="link-col" />
						</colgroup>
						<tbody>
							<tr class="group"><th colspan="3"><span>Graphics {@render icon('collapse')}</span></th></tr>
							<tr>
								<th><label for="leader-prop">Leader</label></th>
								<td class="editing"><input id="leader-prop" type="checkbox" bind:checked={leaderProp} /></td>
								<td></td>
							</tr>
							<tr class="muted"><th>Baseline Offset...</th><td>0,0000 mm</td><td></td></tr>
							<tr class="group"><th colspan="3"><span>Other {@render icon('collapse')}</span></th></tr>
							<tr><th>Equality Display</th><td>Value</td><td></td></tr>
						</tbody>
					</table>
				</div>
				<footer>
					<a href="#help">Properties help</a>
					<button disabled>Apply</button>
				</footer>
			</div>
		</aside>
	</main>

	<footer class="status">
		<span>Click to select, TAB for alternates, CTRL adds, SHIFT unselects.</span>
		<div class="select-tools">
			{#each selectControls as name}{@render tool(name, name)}{/each}
			<button class="filter">{@render icon('filter')}:1</button>
		</div>
	</footer>
</div>

<style>
	:global(body) {
		margin: 0;
		overflow: hidden;
	}

	.window {
		display: flex;
		flex-direction: column;
		height: 100vh;
		background: #f0f0f0;
		color: #000;
		font: 11px/16px 'Noto Sans', 'Open Sans', sans-serif;
		white-space: nowrap;
	}

	button,
	input,
	select {
		box-sizing: border-box;
		margin: 0;
		padding: 0;
		border: 0;
		border-radius: 0;
		background: none;
		color: inherit;
		font: inherit;
	}

	h1,
	h2,
	ul {
		margin: 0;
		padding: 0;
		font: inherit;
	}

	.icon {
		display: block;
		flex: none;
	}

	.tool {
		display: flex;
		align-items: center;
		justify-content: center;
	}

	.on {
		background: #aed2f3;
		box-shadow: inset 0 0 0 1px #0f62b4;
	}

	.rule {
		width: 1px;
		background: #a3a3a3;
	}

	/* Title bar and tabs */
	.top {
		display: grid;
		grid-template: 21px 20px / 35px 1fr;
		background: #9f9f9f;
		border-bottom: 1px solid #5cb82c;
	}

	.app-button {
		grid-row: 1 / 3;
		display: flex;
		align-items: center;
		justify-content: space-between;
		height: 38px;
		padding: 0 2px 8px 0;
		border: solid #222;
		border-width: 0 1px 1px 0;
		background: linear-gradient(#d4d4d4, #858585);
	}

	.title-bar {
		display: flex;
		background: #c9c795;
		border-bottom: 1px solid #a9a77c;
		box-sizing: border-box;
	}

	h1 {
		display: flex;
		flex: 1;
		gap: 28px;
		padding-left: 203px;
		font-size: 14px;
		line-height: 19px;
		color: #222;
	}

	.info-center {
		display: flex;
		align-items: stretch;
		width: 456px;
		background: linear-gradient(#eee, #bdbdbd);
		border-bottom: 1px solid #555;
	}

	.info-center > .tool {
		width: 24px;
	}

	.info-center > .tool:first-child {
		width: 13px;
	}

	.info-center input {
		width: 180px;
		border: 1px solid #111;
		border-top: 0;
		padding: 0 3px;
		background: #fff;
		font-style: italic;
	}

	.info-center input::placeholder {
		color: #6d6d6d;
	}

	.sign-in {
		display: flex;
		align-items: center;
		gap: 5px;
		width: 118px;
		padding: 0 4px;
	}

	.sign-in span {
		flex: 1;
		text-align: left;
	}

	.help {
		display: flex;
		align-items: center;
		gap: 9px;
		padding-left: 5px;
	}

	.window-buttons {
		display: flex;
		width: 123px;
		padding: 0 3px 3px 0;
		box-sizing: border-box;
		justify-content: flex-end;
	}

	.window-buttons .tool {
		width: 26px;
		padding-bottom: 4px;
	}

	.close {
		display: flex;
		align-items: center;
		justify-content: center;
		width: 45px;
		height: 16px;
		margin-left: 1px;
		background: #c75050;
	}

	.tabs {
		display: flex;
		align-items: flex-end;
		gap: 1px;
		padding-left: 4px;
	}

	.tab {
		height: 18px;
		padding: 0 10px;
		line-height: 14px;
		color: #1c1c1c;
	}

	.active {
		padding: 0 8px 1px;
		border: 2px solid #62f214;
		border-bottom: 0;
		background: linear-gradient(#b5d8a6, #d6e9cd);
	}

	.toggle {
		display: flex;
		align-items: center;
		gap: 4px;
		height: 19px;
		margin-left: 20px;
	}

	/* Ribbon */
	.ribbon {
		display: flex;
		height: 93px;
		background: linear-gradient(#cde3c4, #8c8e8b);
		border-bottom: 1px solid #5cb82c;
	}

	.panel {
		display: flex;
		flex-direction: column;
		box-sizing: border-box;
		border-right: 1px solid #b4bcb1;
		background: #fdfdfd;
		color: #333;
	}

	.panel .body {
		flex: 1;
		box-sizing: border-box;
		display: flex;
		padding: 2px;
	}

	.panel h2 {
		display: flex;
		align-items: center;
		justify-content: center;
		gap: 5px;
		height: 17px;
		margin: 0 1px 1px;
		background: #efefef;
	}

	.large {
		display: flex;
		flex-direction: column;
		align-items: center;
		line-height: 15px;
	}

	.large:disabled {
		color: #aaa;
	}

	.row-tool {
		display: flex;
		align-items: center;
	}

	.wide {
		gap: 7px;
	}

	.select {
		width: 52px;
	}

	.select .large {
		width: 44px;
		height: 72px;
		padding-top: 7px;
		gap: 9px;
	}

	.props {
		width: 83px;
	}

	.props .body {
		display: grid;
		grid-template: 34px 35px / 38px 38px;
		gap: 2px;
	}

	.clipboard {
		width: 80px;
	}

	.clipboard .large {
		width: 52px;
		padding-top: 4px;
		gap: 2px;
	}

	.stack {
		display: grid;
		grid-template-rows: 24px 24px 24px;
		width: 24px;
	}

	.geometry {
		width: 108px;
	}

	.geometry .body {
		display: grid;
		grid-template: 24px 24px / 65px 1fr;
		align-content: center;
		padding-left: 7px;
	}

	.geometry span {
		margin: 0 8px 0 4px;
	}

	.modify {
		width: 238px;
	}

	.big-grid {
		display: grid;
		grid-template: 36px 36px / repeat(4, 39px);
	}

	.small-grid {
		display: grid;
		grid-template: repeat(3, 24px) / repeat(3, 25px);
		margin-left: 2px;
	}

	.measure {
		width: 56px;
	}

	.measure .body,
	.create .body {
		display: grid;
		grid-template-rows: 36px 36px;
		padding-left: 6px;
	}

	.create {
		width: 44px;
		margin-right: 4px;
		border-right: 0;
	}

	.create .body {
		padding-left: 2px;
	}

	.witness {
		width: 82px;
	}

	.witness .body {
		justify-content: center;
	}

	.witness .large,
	.editor .large {
		padding-top: 3px;
		gap: 3px;
	}

	.editor .large {
		padding-top: 4px;
		gap: 4px;
	}

	.panel.witness h2 {
		background: #d3eac5;
	}

	.editor {
		width: 158px;
		border-right: 0;
	}

	.editor .body {
		padding-left: 5px;
		gap: 8px;
	}

	.panel.editor h2 {
		background: #dbe0ee;
	}

	/* Quick access toolbar */
	.quick-access {
		display: flex;
		align-items: center;
		height: 22px;
		margin-top: 1px;
		border: solid #666;
		border-width: 1px 0;
		background: linear-gradient(#eee, #bababa);
	}

	.quick-access .tool {
		width: 24px;
		height: 22px;
	}

	.drop {
		display: flex;
		align-items: center;
		justify-content: space-between;
		width: 36px;
		padding: 0 5px 0 3px;
	}

	.quick-access .rule {
		height: 22px;
		margin: 0 3px 0 2px;
	}

	.quick-access .letter {
		font: bold 18px/22px 'Open Sans', sans-serif;
		color: #3b424c;
	}

	/* Options bar */
	.options {
		display: flex;
		align-items: center;
		height: 26px;
		padding-top: 1px;
		box-sizing: border-box;
		background: #d8e3d2;
	}

	.mode {
		box-sizing: border-box;
		width: 139px;
		padding-left: 3px;
		line-height: 22px;
		border-right: 1px solid #999;
		color: #a3aba0;
		text-shadow: 1px 1px #fff;
	}

	.leader {
		display: flex;
		align-items: center;
		gap: 3px;
		width: 66px;
		padding-left: 8px;
	}

	input[type='checkbox'] {
		appearance: none;
		width: 13px;
		height: 13px;
		border: 1px solid #333;
		background: #fff;
	}

	input[type='checkbox']:checked::before {
		content: '';
		display: block;
		width: 11px;
		height: 11px;
		background: #000;
		clip-path: polygon(1px 5px, 3px 5px, 4px 6px, 8px 1px, 10px 1px, 10px 3px, 5px 9px, 4px 9px, 1px 6px);
	}

	.combo {
		display: grid;
		align-items: center;
		box-sizing: border-box;
		height: 22px;
		border: 1px solid #bcbcbc;
		background: linear-gradient(#f2f2f2, #e8e8e8);
	}

	.combo select,
	.combo .icon {
		grid-area: 1 / 1;
	}

	.combo select {
		appearance: none;
		width: 100%;
		padding-left: 3px;
	}

	.combo .icon {
		justify-self: end;
		margin-right: 3px;
		pointer-events: none;
	}

	.prefer {
		width: 106px;
		margin-left: 4px;
		border-color: #e4e4e4;
		background: #ececec;
	}

	.prefer select {
		padding-left: 1px;
	}

	/* Work area */
	main {
		flex: 1;
		display: flex;
		min-height: 0;
		margin-bottom: 2px;
	}

	.palette-title {
		display: flex;
		align-items: center;
		justify-content: space-between;
		height: 19px;
		margin-bottom: 2px;
		padding-right: 5px;
		background: #bfcddb;
	}

	.browser {
		display: flex;
		flex-direction: column;
		width: 209px;
	}

	.browser h2 {
		text-indent: -3px;
	}

	.tree {
		flex: 1;
		list-style: none;
		border: solid #6d6d6d;
		border-width: 1px 0 0;
		box-shadow: inset -1px 0 #c8c8c8;
		background: #fff;
	}

	.tree li {
		display: flex;
		height: 18px;
	}

	.guides rect {
		fill: #fff;
		stroke: #8f8f8f;
	}

	.guides .sign {
		stroke: #2b4fa5;
	}

	.dots {
		fill: none;
		stroke: #8a8a8a;
		stroke-dasharray: 1 1;
		shape-rendering: crispEdges;
	}

	.node-icon {
		display: flex;
		align-items: center;
		justify-content: center;
		width: 17px;
	}

	.node {
		padding: 0 3px;
		line-height: 18px;
	}

	.node-icon + .node {
		margin-left: 2px;
	}

	.bold {
		font-weight: bold;
	}

	.selected {
		background: #e3e0e0;
	}

	.view {
		flex: 1;
		display: grid;
		grid-template: 1fr 17px / 1fr 16px;
		min-width: 0;
		margin: 1px 6px 0 5px;
		border: solid #6d6d6d;
		border-width: 1px 0 0 1px;
	}

	.canvas {
		position: relative;
		overflow: hidden;
		min-height: 0;
		background: #fff;
	}

	.drawing {
		position: absolute;
		inset: 0;
		fill: none;
	}

	.green {
		stroke: #008000;
	}

	.black {
		stroke: #000;
	}

	.blue {
		stroke: #0038b8;
	}

	.green,
	.black,
	.blue {
		shape-rendering: crispEdges;
	}

	.lock {
		fill: #c4f4f8;
	}

	.grips {
		fill: #86b4f0;
		stroke: #6a7890;
	}

	.grips .dark {
		fill: #3676d8;
		stroke: #1d2a44;
	}

	.pink {
		stroke: #ee3399;
	}

	.dim-text {
		fill: #000;
		font: 14px 'Liberation Sans', sans-serif;
		text-anchor: middle;
	}

	.picked {
		fill: #0038b8;
	}

	.small {
		font-size: 11px;
	}

	.mdi {
		position: absolute;
		top: 8px;
		right: 5px;
		display: flex;
		gap: 6px;
	}

	.nav-bar {
		position: absolute;
		top: 28px;
		right: 1px;
		display: flex;
		flex-direction: column;
		align-items: center;
		box-sizing: border-box;
		width: 35px;
		height: 118px;
		border: 2px solid #9f9f9f;
		border-radius: 5px;
		background: #eee;
	}

	.corner {
		align-self: flex-end;
		margin: 1px 1px 0;
	}

	.wheel {
		display: grid;
		width: 26px;
		margin: 9px 0 4px;
	}

	.wheel b {
		grid-area: 1 / 1;
		align-self: end;
		justify-self: end;
		line-height: 12px;
		font-size: 10px;
		color: #2f6cad;
	}

	.wheel .icon,
	.wheel :global(svg) {
		grid-area: 1 / 1;
	}

	.nav-bar hr {
		width: 26px;
		margin: 4px 0 8px;
		border: 0;
		border-top: 1px solid #999;
	}

	.nav-bar .tool {
		margin-bottom: 9px;
	}

	.nav-bar .corner:last-child {
		margin-top: auto;
		margin-bottom: 1px;
	}

	.v-scroll {
		display: flex;
		flex-direction: column;
		align-items: center;
		justify-content: space-between;
		padding: 6px 1px 6px 0;
	}

	.v-scroll i {
		width: 15px;
		height: 17px;
		background: #cdcdcd;
	}

	.view-bar {
		display: flex;
		align-items: center;
	}

	.scale {
		width: 59px;
		padding-left: 27px;
		box-sizing: border-box;
		margin-right: 17px;
	}

	.view-bar > .tool {
		width: 21px;
	}

	.h-scroll {
		flex: 1;
		display: flex;
		align-items: center;
		justify-content: space-between;
		padding: 0 6px;
	}

	.h-scroll i {
		width: 17px;
		height: 15px;
		background: #cdcdcd;
	}

	.size-grip {
		display: flex;
		align-items: flex-end;
		justify-content: center;
	}

	/* Properties palette */
	.properties {
		display: flex;
		flex-direction: column;
		width: 220px;
	}

	.properties h2 {
		padding-left: 4px;
	}

	.palette-body {
		flex: 1;
		display: flex;
		flex-direction: column;
		margin: 0 2px 0 1px;
		border: solid #6d6d6d;
		border-width: 1px 0 0 1px;
	}

	.type-selector {
		display: flex;
		align-items: center;
		gap: 4px;
		height: 72px;
		padding: 0 3px;
		border-bottom: 1px solid #ccc;
		background: linear-gradient(#fafafa, #ebebeb);
		text-align: left;
		color: #333;
	}

	.type-selector span {
		flex: 1;
		padding-top: 2px;
	}

	.preview {
		width: 64px;
		height: 64px;
		border: 1px solid #ccc;
	}

	.filter-row {
		display: flex;
		align-items: center;
		height: 25px;
	}

	.filter-row .combo {
		width: 133px;
	}

	.edit-type {
		display: flex;
		flex: 1;
		align-items: center;
		gap: 4px;
		padding: 0 0 3px 6px;
		color: #222;
	}

	.table-area {
		flex: 1;
		background: #fff;
	}

	table {
		width: 100%;
		border-collapse: separate;
		border-spacing: 0;
		table-layout: fixed;
	}

	.name-col {
		width: 102px;
	}

	.link-col {
		width: 12px;
	}

	th,
	td {
		box-sizing: border-box;
		height: 18px;
		padding: 0 2px;
		border: dotted #999;
		border-width: 0 1px 1px 0;
		text-align: left;
		vertical-align: top;
		font-weight: normal;
		line-height: 16px;
	}

	th {
		padding: 0 0 0 8px;
	}

	.group th {
		border: 0;
		padding: 0 6px 0 2px;
		background: #dcdcdc;
		line-height: 18px;
	}

	.group span {
		display: flex;
		align-items: center;
		justify-content: space-between;
	}

	.editing {
		border: 1px solid #000;
	}

	.editing input {
		display: block;
		margin: 1px 0 0 1px;
	}

	.muted {
		color: #7c7c7c;
	}

	.properties footer {
		display: flex;
		align-items: center;
		justify-content: space-between;
		height: 26px;
		padding: 0 2px;
		background: #f0f0f0;
	}

	.properties a {
		color: #0a6ac8;
		text-decoration: underline;
	}

	.properties footer button {
		width: 73px;
		height: 21px;
		border: 1px solid #d5d5d5;
		color: #8c8c8c;
	}

	/* Status bar */
	.status {
		display: flex;
		align-items: center;
		justify-content: space-between;
		height: 23px;
		border-top: 1px solid #8a8a8a;
		background: linear-gradient(#e6e6e6, #c2c2c2);
	}

	.status > span {
		text-indent: -3px;
	}

	.select-tools {
		display: flex;
		width: 222px;
		gap: 4px;
	}

	.select-tools .tool {
		width: 22px;
		height: 22px;
		background: #dadada;
	}

	.filter {
		display: flex;
		align-items: center;
	}
</style>
